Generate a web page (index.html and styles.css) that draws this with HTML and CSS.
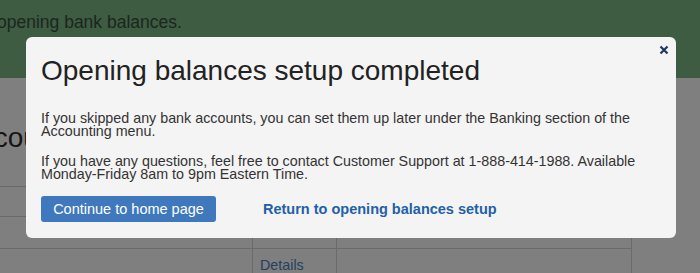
FILE: index.html
```html
<!DOCTYPE html>
<html>
<head>
<meta charset="utf-8">
<link rel="stylesheet" href="styles.css">
</head>
<body>
<div class="page">
  <div class="banner"><span class="banner-text">opening bank balances.</span></div>
  <div class="content">
    <h2 class="heading">Accounts</h2>
    <table class="grid">
      <tr><td class="c1"></td><td class="c2"></td><td class="c3"></td></tr>
      <tr class="r2"><td class="c1"></td><td class="c2"></td><td class="c3"></td></tr>
      <tr class="r3"><td class="c1"></td><td class="c2"><span class="details">Details</span></td><td class="c3"></td></tr>
    </table>
  </div>
</div>
<div class="modal">
  <button class="close" aria-label="Close">
    <svg width="10" height="10" viewBox="0 0 10 10"><path d="M1.5 1.5 L8.5 8.5 M8.5 1.5 L1.5 8.5" stroke="#1b3a5e" stroke-width="2.2" stroke-linecap="butt"/></svg>
  </button>
  <h1 class="title">Opening balances setup completed</h1>
  <p class="text">If you skipped any bank accounts, you can set them up later under the Banking section of the Accounting menu.</p>
  <p class="text">If you have any questions, feel free to contact Customer Support at 1-888-414-1988. Available Monday-Friday 8am to 9pm Eastern Time.</p>
  <div class="actions">
    <button class="primary">Continue to home page</button>
    <a class="link" href="#">Return to opening balances setup</a>
  </div>
</div>
</body>
</html>
```
FILE: styles.css
```css
html, body {
  margin: 0;
  padding: 0;
}
body {
  width: 700px;
  height: 273px;
  overflow: hidden;
  background: #7f7f7f;
  font-family: "Liberation Sans", Arial, sans-serif;
  position: relative;
}
.page {
  display: flex;
  flex-direction: column;
}
.banner {
  height: 78px;
  background: #3d5c42;
  display: flex;
  align-items: flex-start;
}
.banner-text {
  margin-top: 12px;
  margin-left: -3px;
  font-size: 17.5px;
  color: #1c261d;
  white-space: nowrap;
}
.content {
  display: flex;
  flex-direction: column;
}
.heading {
  margin: 44px 0 0 -39px;
  font-size: 28px;
  font-weight: normal;
  color: #151515;
  line-height: 32px;
  height: 32px;
  white-space: nowrap;
}
.grid {
  margin-top: 32px;
  width: 632px;
  border-collapse: collapse;
}
.grid td {
  border-top: 1px solid #6a6a6a;
  padding: 0;
  height: 29px;
}
.grid .r2 td { height: 31px; }
.grid .r3 td { height: 26px; vertical-align: top; }
.grid .c1 { width: 252px; }
.grid .c2 { width: 83px; border-left: 1px solid #6a6a6a; }
.grid .c3 { border-left: 1px solid #6a6a6a; border-right: 1px solid #6a6a6a; }
.details {
  display: block;
  padding: 8px 0 0 7px;
  font-size: 14.3px;
  color: #253f5e;
}
.modal {
  position: absolute;
  left: 26px;
  top: 37px;
  width: 650px;
  height: 201px;
  box-sizing: border-box;
  background: #f4f4f4;
  border-radius: 6px;
  padding: 18px 15px 0 15px;
}
.close {
  position: absolute;
  right: 5px;
  top: 6px;
  width: 14px;
  height: 14px;
  padding: 2px;
  border: 0;
  background: none;
  display: flex;
  align-items: center;
  justify-content: center;
}
.title {
  margin: 0;
  font-size: 28px;
  font-weight: normal;
  color: #222;
  line-height: 32px;
}
.text {
  margin: 25px 0 0 0;
  font-size: 14.3px;
  line-height: 13px;
  color: #333;
}
.text + .text { margin-top: 17px; }
.actions {
  margin-top: 15px;
  display: flex;
  align-items: center;
  gap: 47px;
}
.primary {
  width: 175px;
  height: 26px;
  border: 0;
  border-radius: 3px;
  background: #3f78bc;
  color: #fff;
  font-family: "Liberation Sans", Arial, sans-serif;
  font-size: 14.5px;
  padding: 0;
}
.link {
  font-size: 14.5px;
  font-weight: bold;
  color: #2360a8;
  text-decoration: none;
}
```
